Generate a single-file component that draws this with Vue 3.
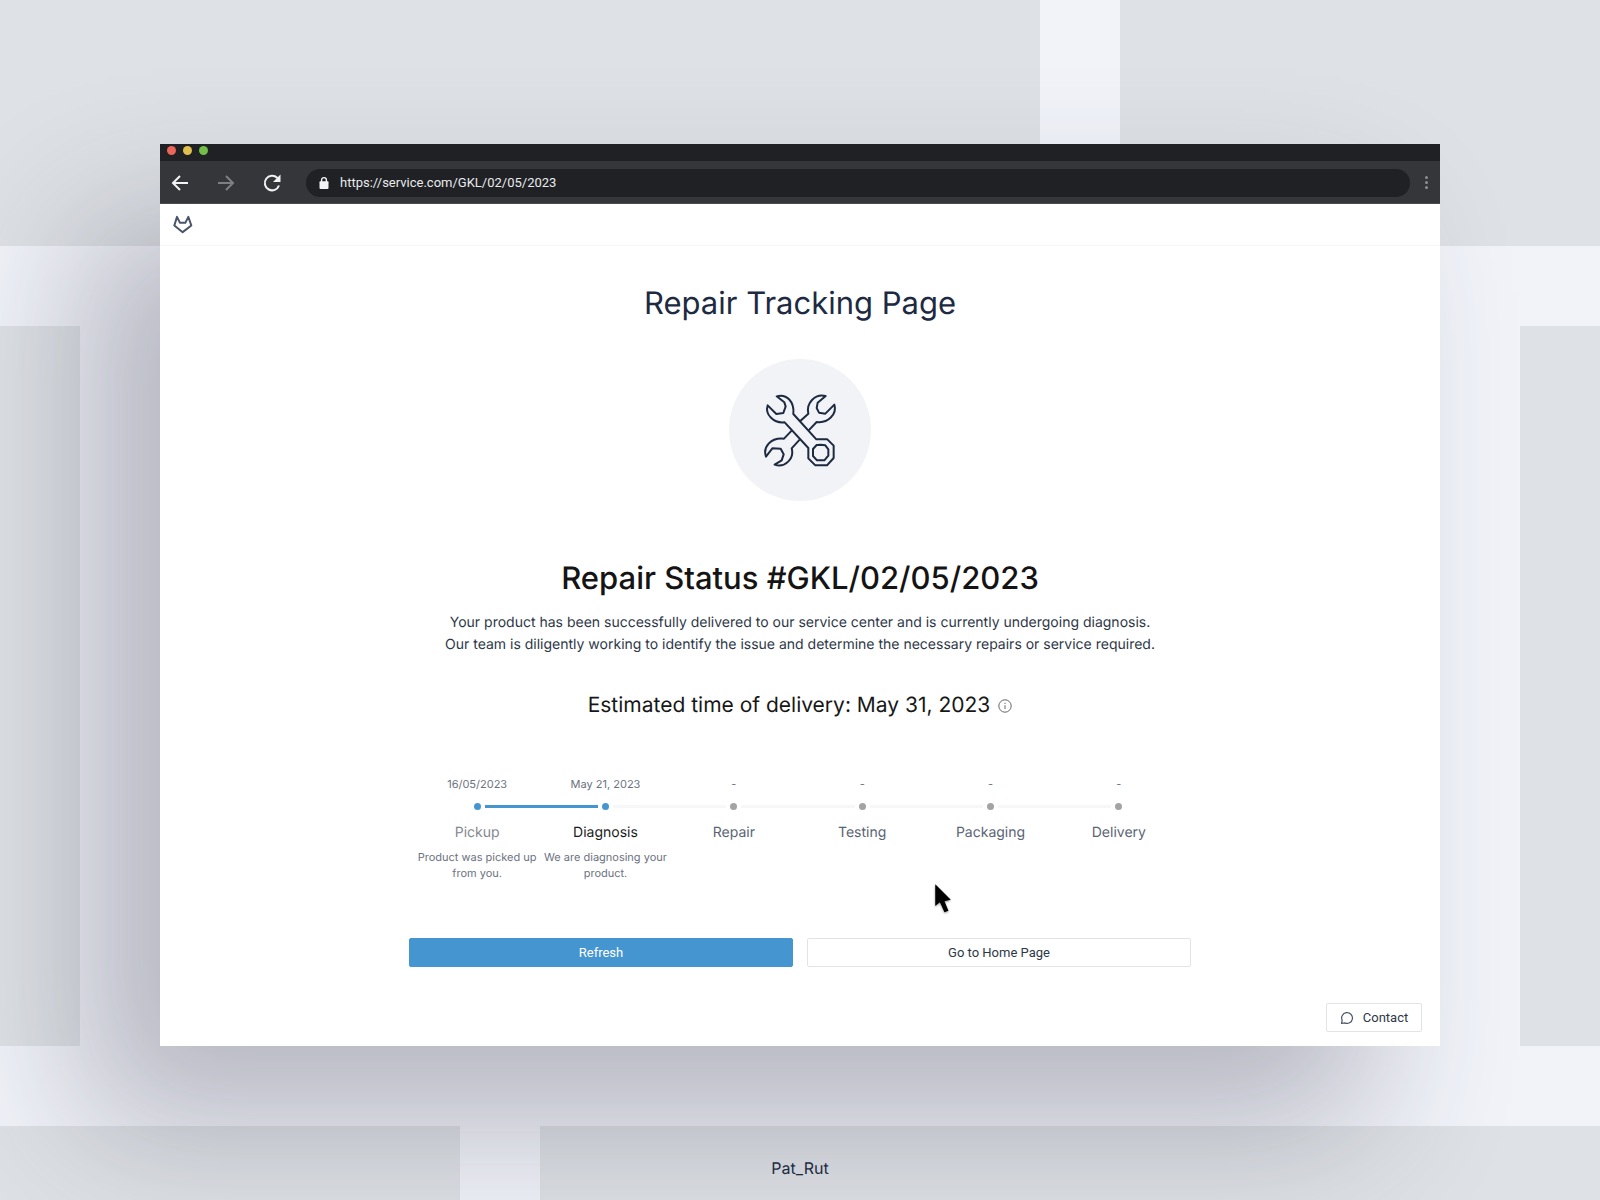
<script setup>
const steps = [
  { name: 'Pickup', date: '16/05/2023', note: 'Product was picked up from you.', state: 'done' },
  { name: 'Diagnosis', date: 'May 21, 2023', note: 'We are diagnosing your product.', state: 'current' },
  { name: 'Repair', date: '-', note: '', state: 'todo' },
  { name: 'Testing', date: '-', note: '', state: 'todo' },
  { name: 'Packaging', date: '-', note: '', state: 'todo' },
  { name: 'Delivery', date: '-', note: '', state: 'todo' }
]
</script>

<template>
  <div class="stage">
    <div class="backdrop" aria-hidden="true">
      <div class="band band-top"><i class="block"></i><i class="block short"></i></div>
      <div class="band band-middle"><i class="block edge"></i><i class="block edge"></i></div>
      <div class="band band-bottom"><i class="block short-left"></i><i class="block"></i></div>
    </div>

    <section class="window">
      <div class="tabs"><i class="light red"></i><i class="light yellow"></i><i class="light green"></i></div>
      <div class="toolbar">
        <div class="tools">
          <button class="tool" aria-label="Back">
            <svg viewBox="0 0 20 20" width="20" height="20"><path d="M18 10H3M10 3L3 10l7 7" /></svg>
          </button>
          <button class="tool dim" aria-label="Forward">
            <svg viewBox="0 0 20 20" width="20" height="20"><path d="M2 10h15M10 3l7 7-7 7" /></svg>
          </button>
          <button class="tool" aria-label="Reload">
            <svg viewBox="0 0 20 20" width="20" height="20">
              <path d="M17 12.5A7.3 7.3 0 1 1 15.2 4.8L16.5 6" />
              <path class="solid" d="M18.5 1.5V9h-7.5z" />
            </svg>
          </button>
        </div>
        <div class="address">
          <svg viewBox="0 0 10 14" width="10" height="14">
            <path d="M2.6 6V4a2.4 2.4 0 0 1 4.8 0v2" fill="none" stroke="#f1f3f4" stroke-width="1.4" />
            <rect x="0.5" y="5.2" width="9" height="7.8" rx="1" fill="#f1f3f4" />
          </svg>
          <input type="text" aria-label="Address" value="https://service.com/GKL/02/05/2023" />
        </div>
        <button class="menu" aria-label="Menu"><i></i><i></i><i></i></button>
      </div>

      <header class="site-header">
        <a href="#" aria-label="Home">
          <svg viewBox="70 242 60 56" width="20" height="19">
            <path d="M82 247L91 265H107L116 247L125 273L99 293L74 273Z" />
          </svg>
        </a>
      </header>

      <main class="content">
        <h1>Repair Tracking Page</h1>
        <div class="badge">
          <svg viewBox="66 66 228 228" width="76" height="76">
            <path d="M110 79C140 70 164 96 160 132L229 208H262L281 227V264L261 286H226L205 265V234L134 157C102 161 74 134 83 106L109 132L130 129L137 109L133 97Z" />
            <path d="M242 224L256 226L265 238V257L253 271H231L219 258V237L230 225Z" />
            <path d="M180 154L205 131C198 100 224 70 257 78L233 98L230 114L237 128L256 131L283 104C292 133 263 161 230 156L206 181" />
            <path d="M155 182L132 206C91 202 68 232 78 260L97 235L122 236L131 253L125 271L104 284C133 295 164 267 155 235L179 209" />
          </svg>
        </div>
        <h2>Repair Status #GKL/02/05/2023</h2>
        <p class="message">
          Your product has been successfully delivered to our service center and is currently undergoing diagnosis.<br />
          Our team is diligently working to identify the issue and determine the necessary repairs or service required.
        </p>
        <p class="estimate">
          Estimated time of delivery: May 31, 2023
          <svg viewBox="0 0 14 14" width="14" height="14">
            <circle cx="7" cy="7" r="6.2" />
            <path d="M7 6.2V10M7 3.8V5" />
          </svg>
        </p>

        <ol class="steps">
          <li v-for="step in steps" :key="step.name" :class="step.state">
            <span class="date">{{ step.date }}</span>
            <span class="rail"><i class="line before"></i><i class="dot"></i><i class="line after"></i></span>
            <span class="name">{{ step.name }}</span>
            <span class="note">{{ step.note }}</span>
          </li>
        </ol>

        <div class="actions">
          <button class="button primary">Refresh</button>
          <button class="button">Go to Home Page</button>
        </div>
      </main>

      <div class="support">
        <button class="button contact">
          <svg viewBox="0 0 14 14" width="14" height="14">
            <path d="M1.5 12.5L2.2 9.4A5.4 5.4 0 1 1 4.7 11.9Z" />
          </svg>
          Contact
        </button>
      </div>

      <svg class="cursor" viewBox="464 354 56 94" width="19" height="31" aria-hidden="true">
        <path d="M467 358V424L481 412L495 443L507 438L495 409L514 405Z" />
      </svg>
    </section>

    <footer class="credit">Pat_Rut</footer>
  </div>
</template>

<style>
body {
  margin: 0;
}
</style>

<style scoped>
.stage {
  position: relative;
  z-index: 0;
  box-sizing: border-box;
  min-height: 100vh;
  padding: 144px 10% 0;
  display: flex;
  flex-direction: column;
  background: #f1f3f9;
  color: #1d2a41;
  font-family: Inter, "Liberation Sans", sans-serif;
  text-rendering: geometricPrecision;
}

.backdrop {
  position: absolute;
  inset: 0;
  z-index: -1;
  display: flex;
  flex-direction: column;
  gap: 80px;
}
.band {
  display: flex;
  gap: 80px;
}
.band-top {
  flex: 0 0 246px;
}
.band-middle {
  flex: 1;
  justify-content: space-between;
}
.band-bottom {
  flex: 0 0 74px;
}
.block {
  flex: 1;
  background: #dee2e6;
}
.block.short {
  flex: 0 0 30%;
}
.block.short-left {
  flex: 0 0 460px;
}
.block.edge {
  flex: 0 0 80px;
}

.window {
  position: relative;
  flex: 1;
  display: flex;
  flex-direction: column;
  background: #fff;
  box-shadow: -76px 80px 136px rgba(48, 42, 62, 0.3);
}
.tabs {
  display: flex;
  gap: 7px;
  height: 17px;
  padding-left: 7px;
  box-sizing: border-box;
  background: #202124;
}
.light {
  width: 9px;
  height: 9px;
  margin-top: 2px;
  border-radius: 50%;
}
.red {
  background: #ec6559;
}
.yellow {
  background: #e0bf4d;
}
.green {
  background: #72be47;
}
.toolbar {
  display: flex;
  align-items: center;
  height: 41px;
  padding: 1px 12px 0 10px;
  border-bottom: 1px solid #4b4c50;
  background: #35363a;
}
.tools {
  display: flex;
  gap: 26px;
  margin-right: 24px;
}
.tool,
.menu {
  padding: 0;
  border: 0;
  background: none;
}
.tool {
  width: 20px;
  height: 20px;
}
.tool svg {
  display: block;
  fill: none;
  stroke: #f1f3f4;
  stroke-width: 2;
}
.tool.dim svg {
  stroke: #7d7f83;
}
.tool .solid {
  fill: #f1f3f4;
  stroke: none;
}
.address {
  flex: 1;
  display: flex;
  align-items: center;
  gap: 11px;
  height: 28px;
  padding: 0 13px;
  box-sizing: border-box;
  border-radius: 14px;
  background: #202124;
}
.address input {
  flex: 1;
  padding: 0;
  border: 0;
  outline: 0;
  background: none;
  color: #e8eaed;
  font: 13px/16px Roboto, "Liberation Sans", sans-serif;
}
.menu {
  display: flex;
  flex-direction: column;
  gap: 2px;
  margin-left: 15px;
}
.menu i {
  width: 3px;
  height: 3px;
  border-radius: 50%;
  background: #8d8f93;
}
.site-header {
  display: flex;
  align-items: center;
  height: 41px;
  padding: 0 13px;
  border-bottom: 1px solid #f5f5f7;
}
.site-header a,
.site-header svg {
  display: block;
}
.site-header path {
  fill: none;
  stroke: #4a5568;
  stroke-width: 6;
  stroke-linejoin: round;
}

.content {
  flex: 1;
  width: 782px;
  max-width: 100%;
  margin: 0 auto;
  text-align: center;
}
h1,
h2,
p,
ol {
  margin: 0;
}
h1 {
  padding-top: 38px;
  font-size: 31px;
  line-height: 40px;
  font-weight: 400;
}
.badge {
  display: flex;
  align-items: center;
  justify-content: center;
  width: 142px;
  height: 142px;
  margin: 35px auto 58px;
  border-radius: 50%;
  background: #f1f3f7;
}
.badge path {
  fill: none;
  stroke: #1d2a41;
  stroke-width: 6;
  stroke-linejoin: round;
}
h2 {
  color: #141414;
  font-size: 31px;
  line-height: 40px;
  font-weight: 500;
}
.message {
  padding-top: 13px;
  color: #2d3748;
  font-size: 14px;
  line-height: 22px;
  white-space: nowrap;
}
.estimate {
  display: flex;
  align-items: center;
  justify-content: center;
  gap: 8px;
  padding-top: 36px;
  color: #171717;
  font-size: 21px;
  line-height: 28px;
}
.estimate svg {
  fill: none;
  stroke: #666;
  stroke-width: 1;
}
.steps {
  display: grid;
  grid-template-columns: repeat(6, 1fr);
  padding: 56px 8px 0 4px;
  list-style: none;
}
.steps li {
  display: flex;
  flex-direction: column;
}
.date,
.note {
  color: #6b7280;
  font-size: 11px;
  line-height: 16px;
}
.rail {
  display: flex;
  align-items: center;
  gap: 4px;
  height: 7px;
  margin: 11px 0 12px;
}
.line {
  flex: 1;
  height: 3px;
  background: #f7f7f7;
}
.dot {
  width: 7px;
  height: 7px;
  border-radius: 50%;
  background: #a3a3a3;
}
.done .dot,
.current .dot,
.done .after,
.current .before {
  background: #4595d1;
}
.steps li:first-child .before,
.steps li:last-child .after {
  visibility: hidden;
}
.name {
  color: #5a6474;
  font-size: 14px;
  line-height: 22px;
}
.done .name {
  color: #85888f;
}
.current .name {
  color: #1c1c1c;
}
.note {
  min-height: 32px;
  padding-top: 5px;
}
.actions {
  display: flex;
  gap: 14px;
  padding-top: 57px;
}
.button {
  flex: 1;
  height: 29px;
  padding: 0;
  border: 1px solid #e3e4e7;
  border-radius: 2px;
  background: #fff;
  color: #2d3748;
  font: 13px/16px Roboto, "Liberation Sans", sans-serif;
}
.primary {
  border-color: #4595d1;
  background: #4595d1;
  color: #fff;
}
.support {
  display: flex;
  justify-content: flex-end;
  padding: 36px 18px 14px;
}
.contact {
  flex: 0 0 96px;
  display: flex;
  align-items: center;
  justify-content: center;
  gap: 9px;
}
.contact path {
  fill: none;
  stroke: #4a5568;
  stroke-width: 1.2;
  stroke-linejoin: round;
}
.cursor {
  position: absolute;
  top: 739px;
  left: calc(50% + 134px);
  filter: drop-shadow(0 1px 1px rgba(0, 0, 0, 0.4));
}
.credit {
  position: relative;
  padding: 110px 0 20px;
  font-size: 16px;
  line-height: 24px;
  text-align: center;
}
</style>
